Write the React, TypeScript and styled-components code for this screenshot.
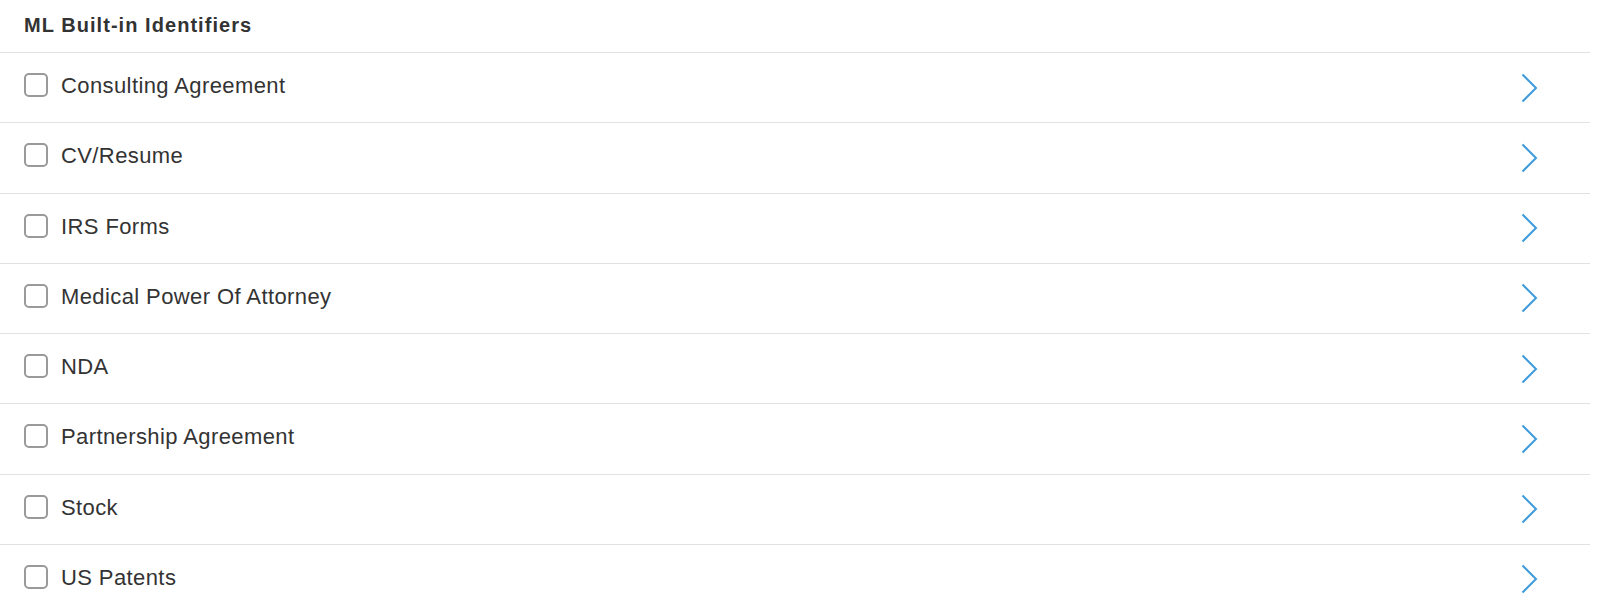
import styled, { createGlobalStyle } from "styled-components";

const identifiers = [
  "Consulting Agreement",
  "CV/Resume",
  "IRS Forms",
  "Medical Power Of Attorney",
  "NDA",
  "Partnership Agreement",
  "Stock",
  "US Patents",
];

const GlobalStyle = createGlobalStyle`
  body {
    margin: 0;
    background: #ffffff;
    font-family: "Liberation Sans", Arial, sans-serif;
  }
`;

const ChevronIcon = () => (
  <svg width="17" height="30" viewBox="0 0 17 30" fill="none">
    <path d="M1.5 1.5 L15 15 L1.5 28.5" stroke="#3f9bdb" strokeWidth="2" />
  </svg>
);

const App = () => {
  return (
    <>
      <GlobalStyle />
      <Panel>
        <Header>ML Built-in Identifiers</Header>
        {identifiers.map((name) => (
          <Row key={name}>
            <Left>
              <Checkbox type="checkbox" />
              <Label>{name}</Label>
            </Left>
            <ChevronIcon />
          </Row>
        ))}
      </Panel>
    </>
  );
};

export default App;

const Panel = styled.div`
  width: 1590px;
  display: flex;
  flex-direction: column;
`;

const Header = styled.div`
  height: 53px;
  box-sizing: border-box;
  display: flex;
  align-items: center;
  padding: 0 0 2px 24px;
  border-bottom: 1px solid #e1e1e1;
  font-size: 20px;
  font-weight: 700;
  letter-spacing: 1.05px;
  color: #333333;
`;

const Row = styled.div`
  height: 70.25px;
  box-sizing: border-box;
  display: flex;
  align-items: center;
  justify-content: space-between;
  padding: 0 52px 0 24px;
  border-bottom: 1px solid #e1e1e1;
`;

const Left = styled.label`
  display: flex;
  align-items: center;
  gap: 13px;
  padding-bottom: 5px;
`;

const Checkbox = styled.input`
  appearance: none;
  margin: 0;
  width: 24px;
  height: 24px;
  box-sizing: border-box;
  border: 2px solid #9a9a9a;
  border-radius: 5px;
  background: #ffffff;
`;

const Label = styled.span`
  font-size: 22px;
  letter-spacing: 0.4px;
  color: #333333;
  line-height: 24px;
  padding-top: 2px;
`;
